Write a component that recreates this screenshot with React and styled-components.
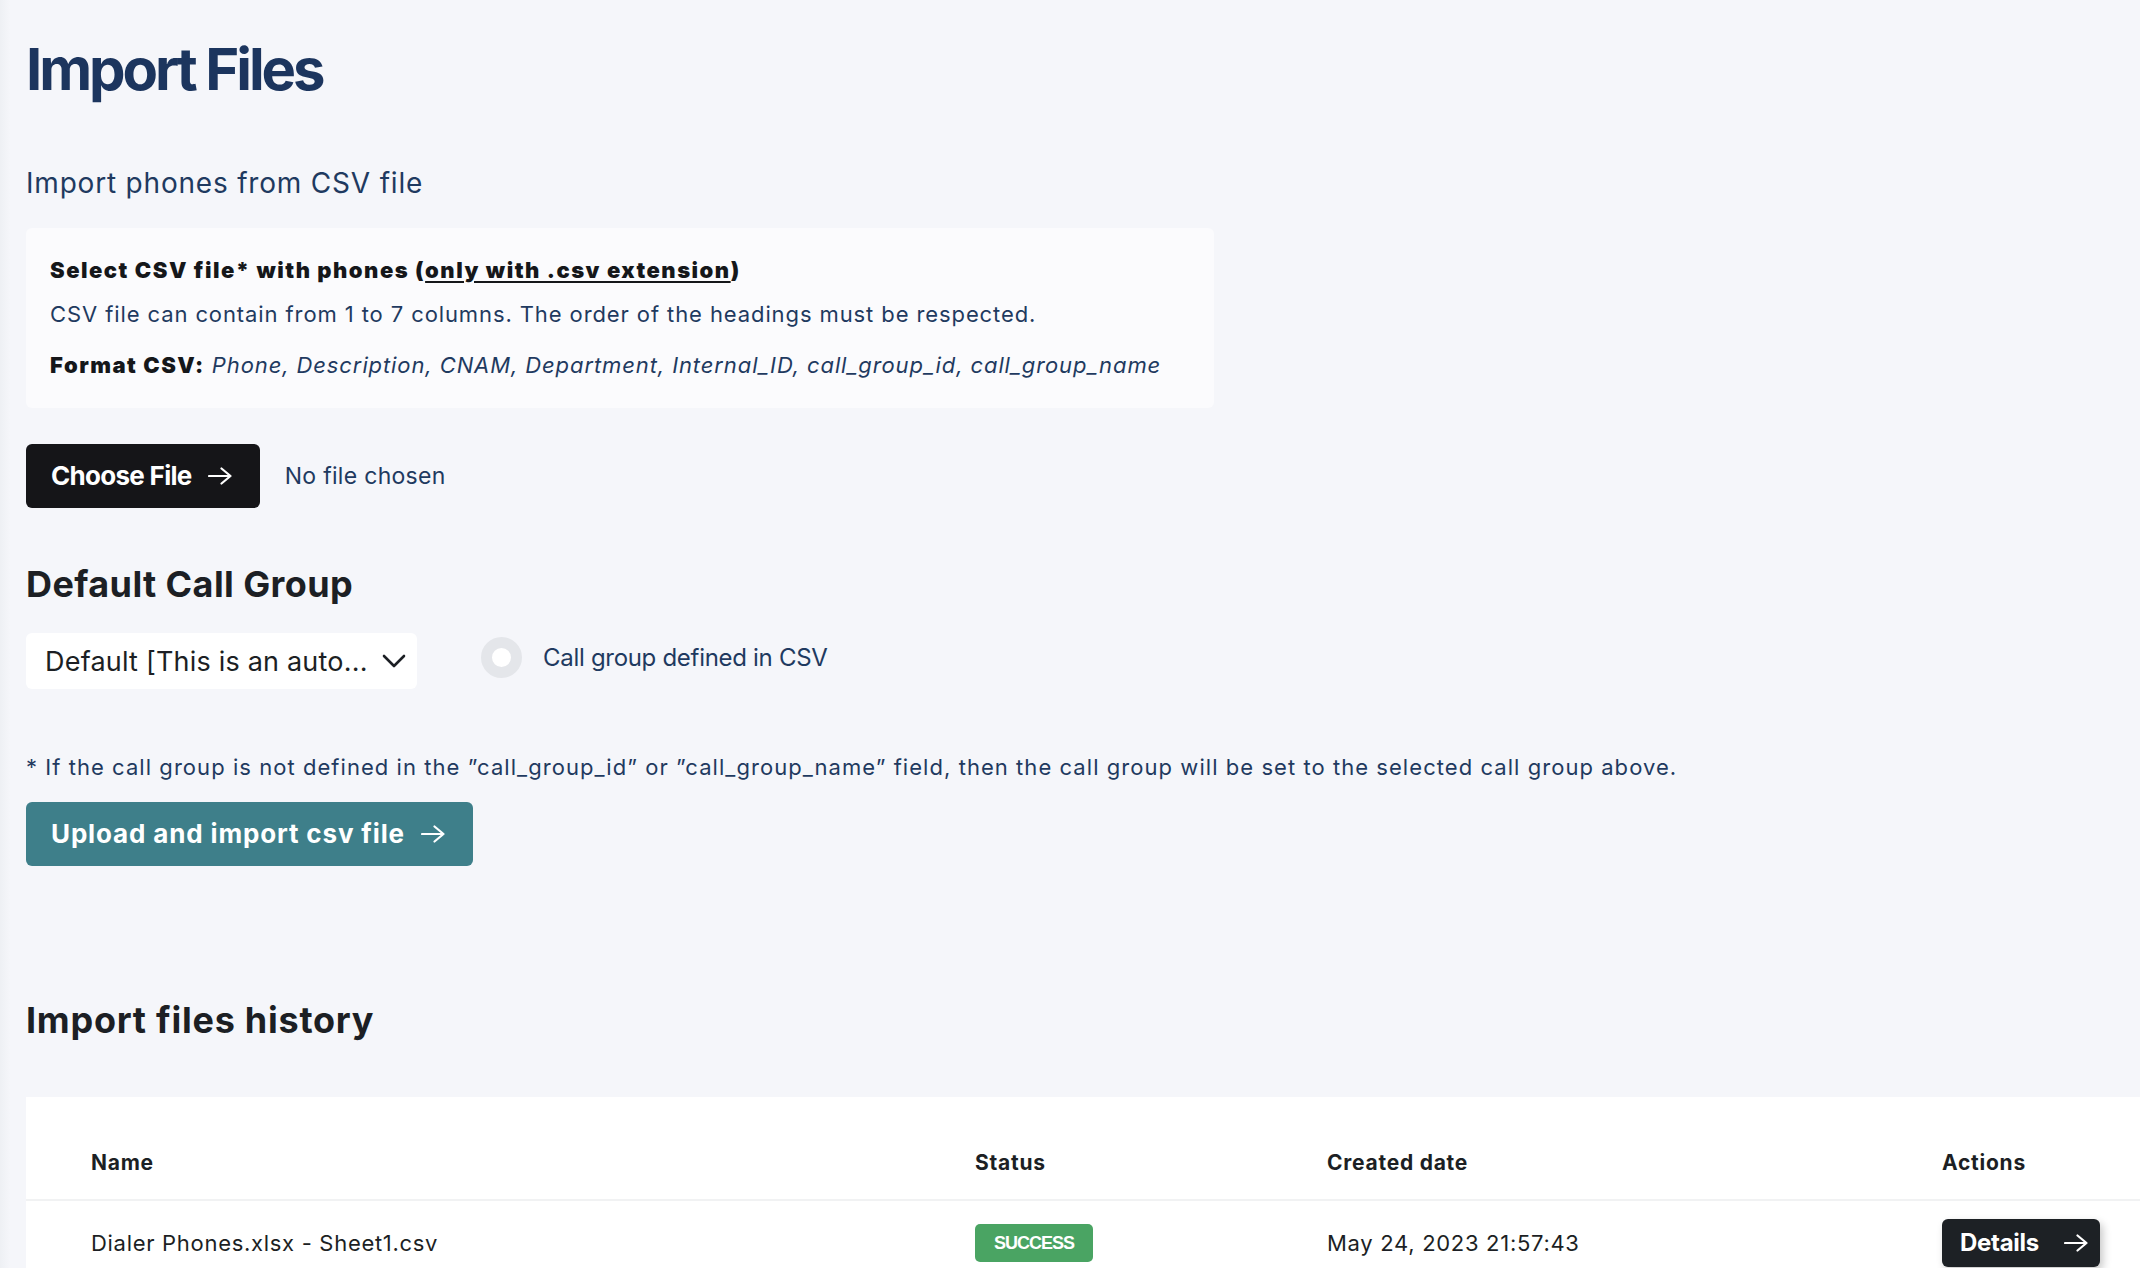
import React from "react";
import styled, { createGlobalStyle } from "styled-components";

const GlobalStyle = createGlobalStyle`
  html, body {
    margin: 0;
    padding: 0;
  }
  body {
    background: linear-gradient(90deg, #eef0f4 0px, #f5f6fa 10px) #f5f6fa;
    font-family: Inter, "Noto Sans", "DejaVu Sans", sans-serif;
    overflow: hidden;
  }
`;

const Page = styled.main`
  padding: 40px 0 0 26px;
  min-height: 1268px;
  box-sizing: border-box;
`;

const Title = styled.h1`
  margin: 0;
  font-size: 58px;
  line-height: 1;
  font-weight: 700;
  letter-spacing: -3.1px;
  color: #1c355e;
`;

const Subtitle = styled.h2`
  margin: 71px 0 0;
  font-size: 28px;
  line-height: 1;
  font-weight: 400;
  letter-spacing: 0.8px;
  color: #1f3a60;
`;

const InfoBox = styled.section`
  margin-top: 31px;
  width: 1188px;
  box-sizing: border-box;
  padding: 31px 24px 32px;
  background: #fbfbfd;
  border-radius: 6px;
`;

const InfoLine = styled.p`
  margin: ${(p) => p.$gap || 0}px 0 0;
  font-size: 22px;
  line-height: 22px;
  color: #1f3a60;
  letter-spacing: 0.9px;
`;

const Strong = styled.strong`
  font-weight: 900;
  color: #15171a;
  letter-spacing: 1.5px;
`;

const Underlined = styled.span`
  text-decoration: underline;
  text-underline-offset: 3px;
  text-decoration-thickness: 2px;
`;

const Formats = styled.em`
  font-style: italic;
  color: #1f3a60;
  letter-spacing: 0.9px;
`;

const FileRow = styled.div`
  margin-top: 36px;
  display: flex;
  align-items: center;
  gap: 25px;
`;

const ActionButton = styled.button`
  display: inline-flex;
  align-items: center;
  gap: ${(p) => p.$gap || 16}px;
  height: ${(p) => p.$height || 64}px;
  padding: 0 ${(p) => p.$padRight || 27}px 0 ${(p) => p.$padLeft || 25}px;
  border: none;
  border-radius: 6px;
  background: ${(p) => p.$bg || "#151518"};
  color: #ffffff;
  font-family: inherit;
  font-size: ${(p) => p.$size || 26}px;
  line-height: 1;
  font-weight: 700;
  letter-spacing: ${(p) => p.$spacing ?? -1}px;
  box-shadow: ${(p) => p.$shadow || "none"};
  cursor: pointer;
`;

const FileStatus = styled.span`
  font-size: 23px;
  line-height: 1;
  color: #1f3a60;
  letter-spacing: 0.3px;
`;

const SectionHeading = styled.h2`
  margin: ${(p) => p.$top}px 0 0;
  font-size: 36px;
  line-height: 1;
  font-weight: 700;
  letter-spacing: ${(p) => p.$spacing ?? 0.4}px;
  color: #1c1f24;
`;

const GroupRow = styled.div`
  margin-top: 31px;
  display: flex;
  align-items: flex-start;
`;

const SelectBox = styled.div`
  width: 391px;
  height: 56px;
  box-sizing: border-box;
  padding: 0 11px 0 19px;
  display: flex;
  align-items: center;
  justify-content: space-between;
  background: #ffffff;
  border-radius: 6px;
  font-size: 27px;
  line-height: 1;
  color: #1c1f24;
  letter-spacing: 0.2px;
  white-space: nowrap;
`;

const RadioOption = styled.label`
  margin: 4px 0 0 64px;
  display: flex;
  align-items: center;
  gap: 21px;
  font-size: 24px;
  line-height: 1;
  color: #1f3a60;
  letter-spacing: -0.3px;
`;

const RadioCircle = styled.span`
  width: 41px;
  height: 41px;
  box-sizing: border-box;
  border-radius: 50%;
  border: 11px solid #e4e6ea;
  background: #ffffff;
`;

const Footnote = styled.p`
  margin: 67px 0 0;
  font-size: 22px;
  line-height: 1;
  color: #1f3a60;
  letter-spacing: 1.05px;
  white-space: nowrap;
`;

const UploadWrap = styled.div`
  margin-top: 24px;
`;

const TableCard = styled.section`
  margin-top: 59px;
  background: #ffffff;
  padding-top: 30px;
`;

const Row = styled.div`
  display: grid;
  grid-template-columns: 924px 352px 615px 1fr;
  align-items: center;
`;

const HeadCell = styled.div`
  padding: 25px 0 26px ${(p) => (p.$first ? 65 : 25)}px;
  font-size: 21px;
  line-height: 1;
  font-weight: 700;
  letter-spacing: 0.75px;
  color: #1c1f24;
  border-bottom: 2px solid #f1f2f3;
`;

const Cell = styled.div`
  padding: 18px 0 18px ${(p) => (p.$first ? 65 : 25)}px;
  font-size: 22px;
  line-height: 1;
  color: #1c1f24;
  letter-spacing: 0.7px;
`;

const Badge = styled.span`
  display: inline-flex;
  align-items: center;
  justify-content: center;
  width: 118px;
  height: 38px;
  border-radius: 5px;
  background: #4aa463;
  color: #ffffff;
  font-family: "Liberation Sans", Arial, sans-serif;
  font-size: 18px;
  font-weight: 700;
  letter-spacing: -1px;
`;

const Arrow = ({ size = 24 }) => (
  <svg width={size} height={(size * 18) / 24} viewBox="0 0 24 18" fill="none">
    <path
      d="M1 9H22.5M13.5 1.5L22.5 9L13.5 16.5"
      stroke="currentColor"
      strokeWidth="2.2"
      strokeLinecap="round"
      strokeLinejoin="round"
    />
  </svg>
);

const Chevron = () => (
  <svg width="24" height="14" viewBox="0 0 24 14" fill="none">
    <path
      d="M2 2L12 12L22 2"
      stroke="#1c1f24"
      strokeWidth="2.6"
      strokeLinecap="round"
      strokeLinejoin="round"
    />
  </svg>
);

export default function App() {
  return (
    <>
      <GlobalStyle />
      <Page>
        <Title>Import Files</Title>
        <Subtitle>Import phones from CSV file</Subtitle>
        <InfoBox>
          <InfoLine>
            <Strong>
              Select CSV file* with phones (<Underlined>only with .csv extension</Underlined>)
            </Strong>
          </InfoLine>
          <InfoLine $gap={22}>
            CSV file can contain from 1 to 7 columns. The order of the headings must be respected.
          </InfoLine>
          <InfoLine $gap={29}>
            <Strong>Format CSV:</Strong>{" "}
            <Formats>
              Phone, Description, CNAM, Department, Internal_ID, call_group_id, call_group_name
            </Formats>
          </InfoLine>
        </InfoBox>

        <FileRow>
          <ActionButton $spacing={-0.7} $padRight={28}>
            Choose File <Arrow />
          </ActionButton>
          <FileStatus>No file chosen</FileStatus>
        </FileRow>

        <SectionHeading $top={58}>Default Call Group</SectionHeading>
        <GroupRow>
          <SelectBox>
            <span>Default [This is an auto...</span>
            <Chevron />
          </SelectBox>
          <RadioOption>
            <RadioCircle />
            Call group defined in CSV
          </RadioOption>
        </GroupRow>

        <Footnote>
          * If the call group is not defined in the ”call_group_id” or ”call_group_name” field, then the call group will be set to the selected call group above.
        </Footnote>

        <UploadWrap>
          <ActionButton $bg="#3e7f8a" $padRight={28} $spacing={0.85}>
            Upload and import csv file <Arrow />
          </ActionButton>
        </UploadWrap>

        <SectionHeading $top={136} $spacing={0.75}>Import files history</SectionHeading>

        <TableCard>
          <Row>
            <HeadCell $first>Name</HeadCell>
            <HeadCell>Status</HeadCell>
            <HeadCell>Created date</HeadCell>
            <HeadCell>Actions</HeadCell>
          </Row>
          <Row>
            <Cell $first>Dialer Phones.xlsx - Sheet1.csv</Cell>
            <Cell>
              <Badge>SUCCESS</Badge>
            </Cell>
            <Cell>May 24, 2023 21:57:43</Cell>
            <Cell>
              <ActionButton
                $bg="#1d2125"
                $height={48}
                $size={24}
                $padLeft={18}
                $padRight={12}
                $gap={25}
                $spacing={-0.3}
                $shadow="3px 4px 8px rgba(0,0,0,0.22)"
              >
                Details <Arrow />
              </ActionButton>
            </Cell>
          </Row>
        </TableCard>
      </Page>
    </>
  );
}
